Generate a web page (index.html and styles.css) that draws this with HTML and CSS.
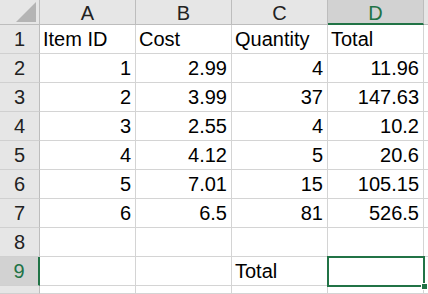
FILE: index.html
```html
<!DOCTYPE html>
<html>
<head>
<meta charset="utf-8">
<link rel="stylesheet" href="styles.css">
</head>
<body>
<div class="sheet">
  <div class="corner"><div class="tri"></div></div>
  <div class="ch">A</div>
  <div class="ch">B</div>
  <div class="ch">C</div>
  <div class="ch sel">D</div>
  <div class="ch edge"></div>

  <div class="rh">1</div>
  <div class="c">Item ID</div>
  <div class="c">Cost</div>
  <div class="c">Quantity</div>
  <div class="c">Total</div>
  <div class="c edge"></div>

  <div class="rh">2</div>
  <div class="c n">1</div>
  <div class="c n">2.99</div>
  <div class="c n">4</div>
  <div class="c n">11.96</div>
  <div class="c edge"></div>

  <div class="rh">3</div>
  <div class="c n">2</div>
  <div class="c n">3.99</div>
  <div class="c n">37</div>
  <div class="c n">147.63</div>
  <div class="c edge"></div>

  <div class="rh">4</div>
  <div class="c n">3</div>
  <div class="c n">2.55</div>
  <div class="c n">4</div>
  <div class="c n">10.2</div>
  <div class="c edge"></div>

  <div class="rh">5</div>
  <div class="c n">4</div>
  <div class="c n">4.12</div>
  <div class="c n">5</div>
  <div class="c n">20.6</div>
  <div class="c edge"></div>

  <div class="rh">6</div>
  <div class="c n">5</div>
  <div class="c n">7.01</div>
  <div class="c n">15</div>
  <div class="c n">105.15</div>
  <div class="c edge"></div>

  <div class="rh">7</div>
  <div class="c n">6</div>
  <div class="c n">6.5</div>
  <div class="c n">81</div>
  <div class="c n">526.5</div>
  <div class="c edge"></div>

  <div class="rh">8</div>
  <div class="c"></div>
  <div class="c"></div>
  <div class="c"></div>
  <div class="c"></div>
  <div class="c edge"></div>

  <div class="rh sel">9</div>
  <div class="c"></div>
  <div class="c"></div>
  <div class="c">Total</div>
  <div class="c active"><span class="handle"></span></div>
  <div class="c edge"></div>

  <div class="rh"></div>
  <div class="c"></div>
  <div class="c"></div>
  <div class="c"></div>
  <div class="c"></div>
  <div class="c edge"></div>
</div>
</body>
</html>
```

FILE: styles.css
```css
html, body {
  margin: 0;
  padding: 0;
  background: #ffffff;
  overflow: hidden;
}

.sheet {
  display: grid;
  grid-template-columns: 40px 96px 96px 96px 96px 4px;
  grid-template-rows: 25px repeat(9, 29px) 8px;
  font-family: "Liberation Sans", Arial, sans-serif;
  font-size: 20px;
  color: #000000;
}

.corner {
  background: #e6e6e6;
  border-right: 1px solid #bdbdbd;
  border-bottom: 1px solid #bdbdbd;
  box-sizing: border-box;
  position: relative;
}

.tri {
  position: absolute;
  right: 3px;
  bottom: 2px;
  width: 0;
  height: 0;
  border-left: 20px solid transparent;
  border-bottom: 20px solid #b4b4b4;
}

.ch {
  background: #e6e6e6;
  border-right: 1px solid #bdbdbd;
  border-bottom: 1px solid #bdbdbd;
  box-sizing: border-box;
  display: flex;
  align-items: flex-end;
  justify-content: center;
  padding-bottom: 1px;
  line-height: 1;
  color: #222222;
}

.ch.sel {
  background: #d2d2d2;
  color: #217346;
  border-bottom: 2px solid #217346;
  padding-bottom: 0;
}

.ch.edge {
  border-right: none;
}

.rh {
  background: #e6e6e6;
  border-right: 1px solid #bdbdbd;
  border-bottom: 1px solid #d0d0d0;
  box-sizing: border-box;
  display: flex;
  align-items: flex-end;
  justify-content: center;
  padding-bottom: 4px;
  line-height: 1;
  color: #222222;
}

.rh.sel {
  background: #d2d2d2;
  color: #217346;
  border-right: 2px solid #217346;
}

.c {
  border-right: 1px solid #d4d4d4;
  border-bottom: 1px solid #d4d4d4;
  box-sizing: border-box;
  display: flex;
  align-items: flex-end;
  padding: 0 3px 4px 3px;
  line-height: 1;
  white-space: nowrap;
}

.c.n {
  justify-content: flex-end;
  padding-right: 4px;
}

.c.edge {
  border-right: none;
}

.c.active {
  position: relative;
  border: none;
}

.c.active::before {
  content: "";
  position: absolute;
  left: -1px;
  top: -1px;
  right: -1px;
  bottom: -1px;
  border: 2px solid #217346;
}

.handle {
  position: absolute;
  right: -4px;
  bottom: -4px;
  width: 7px;
  height: 7px;
  background: #217346;
  border: 1px solid #ffffff;
  box-sizing: border-box;
  z-index: 2;
}
```
